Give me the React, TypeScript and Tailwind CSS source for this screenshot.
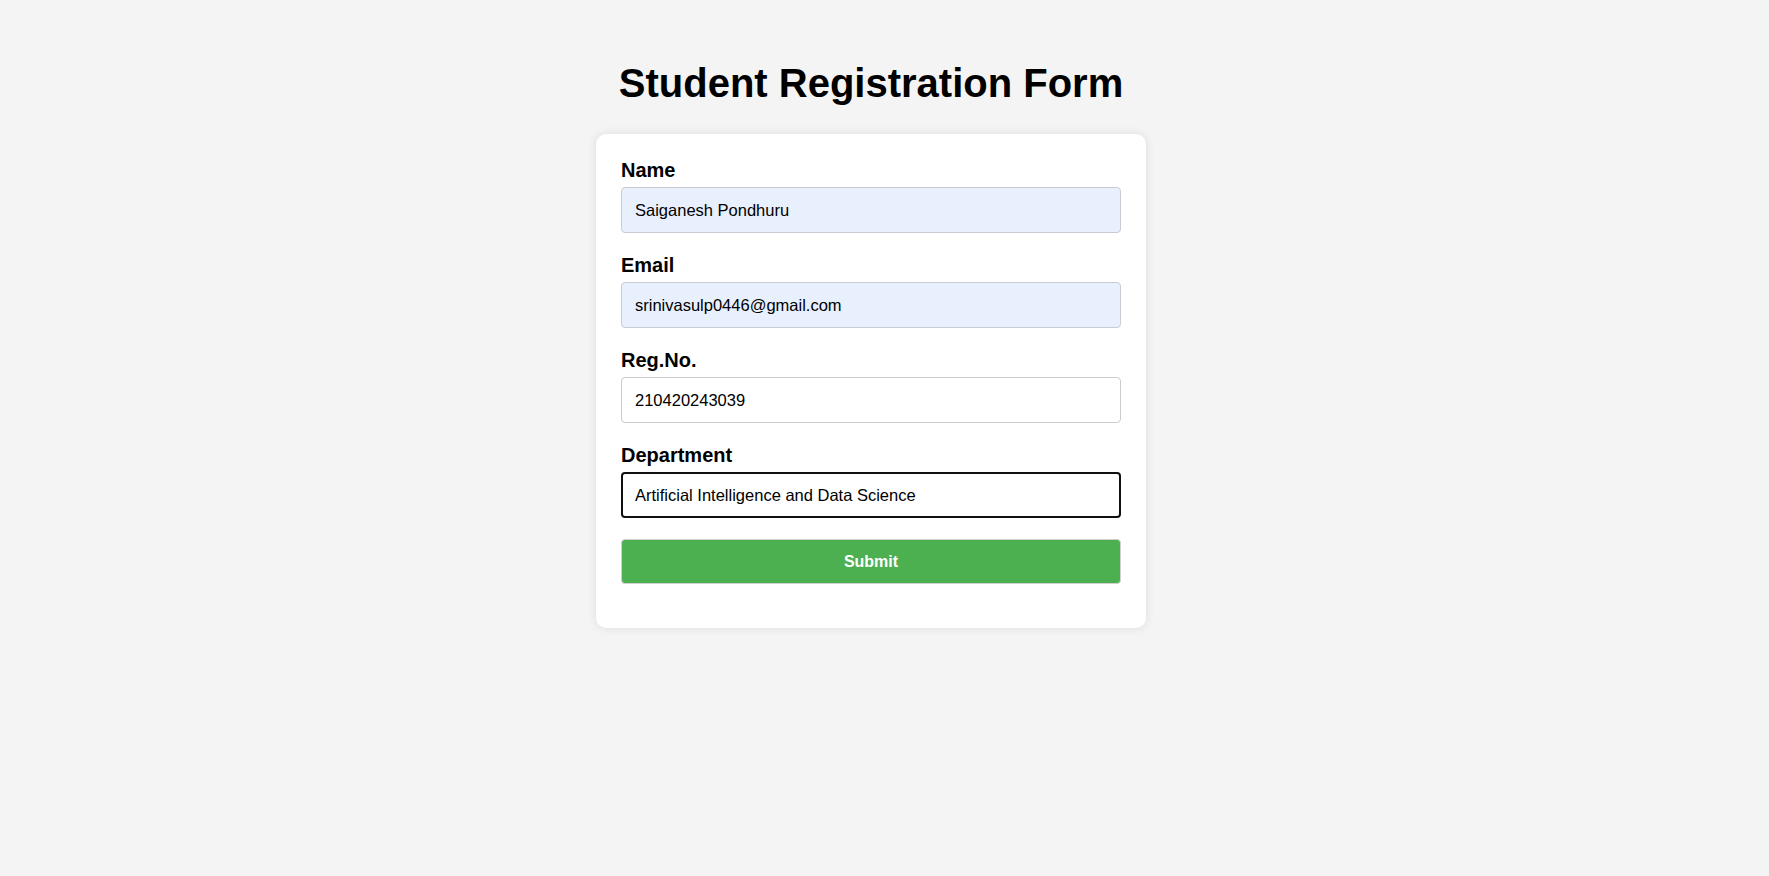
import React from "react";

const fields = [
  { label: "Name", value: "Saiganesh Pondhuru", state: "autofill" },
  { label: "Email", value: "srinivasulp0446@gmail.com", state: "autofill" },
  { label: "Reg.No.", value: "210420243039", state: "plain" },
  { label: "Department", value: "Artificial Intelligence and Data Science", state: "focus" },
];

const App = () => {
  return (
    <div className="min-h-[876px] bg-[#f4f4f4] text-black font-['Liberation_Sans',Arial,sans-serif]">
      <div className="flex flex-col items-center pr-[27px] pt-[61px]">
        {/* Heading */}
        <h1 className="text-[40px] leading-[45px] font-bold mb-[28px]">Student Registration Form</h1>

        {/* Card */}
        <div className="w-[550px] bg-white rounded-[10px] shadow-[0_0_10px_rgba(0,0,0,0.1)] px-[25px] pt-[25px] pb-[44px]">
          {fields.map((f) => (
            <div key={f.label} className="mb-[21px] last:mb-[20px]">
              <label className="block text-[20px] leading-[22px] font-bold mb-[6px]">{f.label}</label>
              <div
                className={`h-[46px] flex items-center rounded-[4px] text-[16.5px] ${
                  f.state === "focus"
                    ? "border-2 border-[#101010] pl-[12px] pr-[11px] bg-white"
                    : f.state === "autofill"
                    ? "border border-[#c8ccd2] pl-[13px] pr-[12px] bg-[#e8f0fe]"
                    : "border border-[#cccccc] pl-[13px] pr-[12px] bg-white"
                }`}
              >
                {f.value}
              </div>
            </div>
          ))}

          <button className="w-full h-[45px] rounded-[4px] border border-[#d0d0d0] bg-[#4caf50] text-white text-[16px] font-bold">
            Submit
          </button>
        </div>
      </div>
    </div>
  );
};

export default App;
